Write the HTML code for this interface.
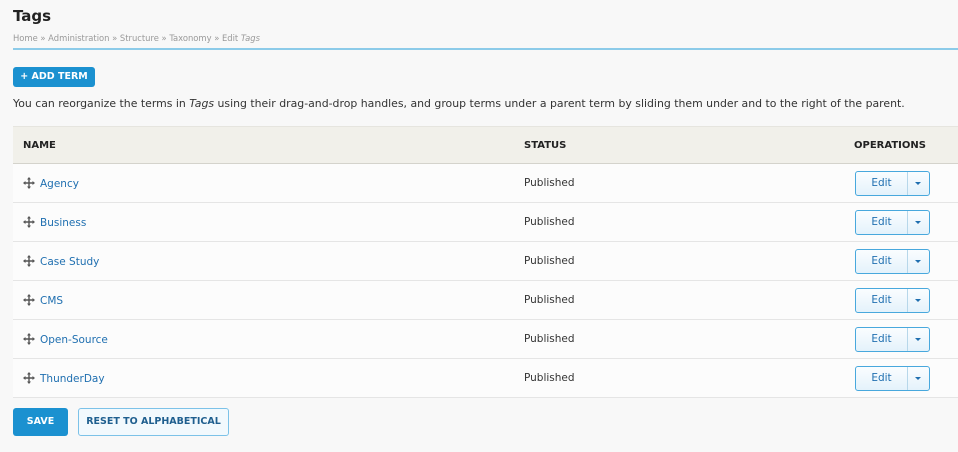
<!DOCTYPE html>
<html><head><style>
body{margin:0;background:#f8f8f8;font-family:"DejaVu Sans",sans-serif;width:958px;height:452px;overflow:hidden;color:#333;}
.t{position:absolute;left:13px;top:7px;font-size:15px;font-weight:bold;color:#222;}
.bc{position:absolute;left:13px;top:33px;font-size:8.4px;color:#999;}
.ln{position:absolute;left:13px;right:0;top:48px;height:2px;background:#8ccbe9;}
.add{position:absolute;left:13px;top:67px;width:82px;height:20px;background:#1b91d0;border-radius:3px;color:#fff;font-size:9.5px;font-weight:bold;text-align:center;line-height:20px;}
.desc{position:absolute;left:13px;top:97px;font-size:10.9px;color:#333;white-space:nowrap;}
table{position:absolute;left:13px;top:126px;width:945px;border-collapse:collapse;font-size:10.5px;table-layout:fixed;}
th{background:#f1f0ea;height:36px;padding:0;text-align:left;font-size:10px;color:#222;border-bottom:1px solid #d4d3cc;border-top:1px solid #e6e5df;}
td{height:38px;padding:0;border-bottom:1px solid #e5e5e5;background:#fcfcfc;}
a{color:#1f6fb0;text-decoration:none;}
.mv{display:inline-block;width:12px;height:12px;vertical-align:-2px;margin:0 5px 0 10px;}
.ed{display:inline-flex;border:1px solid #48a8dd;border-radius:3px;height:23px;background:linear-gradient(#fafdff,#e4f2fb);width:73px;vertical-align:middle;margin-top:1px;}
.ed span{flex:1;text-align:center;line-height:23px;color:#1f6fb0;font-size:10.5px;}
.ed i{width:21px;border-left:1px solid #b7d7ea;position:relative}
.ed i:after{content:"";position:absolute;left:7px;top:10px;border:3px solid transparent;border-top:3px solid #1f6fb0;}
.save{position:absolute;left:13px;top:408px;width:55px;height:28px;background:#1b91d0;border-radius:3px;color:#fff;font-size:9.5px;font-weight:bold;text-align:center;line-height:28px;}
.rst{position:absolute;left:78px;top:408px;width:149px;height:26px;border:1px solid #7cc2e8;border-radius:3px;background:#f2f9fd;color:#1f5f8f;font-size:9.5px;font-weight:bold;text-align:center;line-height:26px;}
</style></head><body>
<div class="t">Tags</div>
<div class="bc">Home » Administration » Structure » Taxonomy » Edit <i>Tags</i></div>
<div class="ln"></div>
<div class="add">+ ADD TERM</div>
<div class="desc">You can reorganize the terms in <i>Tags</i> using their drag-and-drop handles, and group terms under a parent term by sliding them under and to the right of the parent.</div>
<table>
<colgroup><col style="width:511px"><col style="width:330px"><col></colgroup>
<tr><th style="padding-left:10px">NAME</th><th>STATUS</th><th>OPERATIONS</th></tr>
<tr><td><svg class="mv" viewBox="0 0 12 12"><path d="M6 0L8 2.5H4ZM6 12L4 9.5H8ZM0 6L2.5 4V8ZM12 6L9.5 8V4ZM5.3 2h1.4v8H5.3ZM2 5.3h8v1.4H2Z" fill="#555"/></svg><a>Agency</a></td><td>Published</td><td style="padding-left:1px"><div class="ed"><span>Edit</span><i></i></div></td></tr>
<tr><td><svg class="mv" viewBox="0 0 12 12"><path d="M6 0L8 2.5H4ZM6 12L4 9.5H8ZM0 6L2.5 4V8ZM12 6L9.5 8V4ZM5.3 2h1.4v8H5.3ZM2 5.3h8v1.4H2Z" fill="#555"/></svg><a>Business</a></td><td>Published</td><td style="padding-left:1px"><div class="ed"><span>Edit</span><i></i></div></td></tr>
<tr><td><svg class="mv" viewBox="0 0 12 12"><path d="M6 0L8 2.5H4ZM6 12L4 9.5H8ZM0 6L2.5 4V8ZM12 6L9.5 8V4ZM5.3 2h1.4v8H5.3ZM2 5.3h8v1.4H2Z" fill="#555"/></svg><a>Case Study</a></td><td>Published</td><td style="padding-left:1px"><div class="ed"><span>Edit</span><i></i></div></td></tr>
<tr><td><svg class="mv" viewBox="0 0 12 12"><path d="M6 0L8 2.5H4ZM6 12L4 9.5H8ZM0 6L2.5 4V8ZM12 6L9.5 8V4ZM5.3 2h1.4v8H5.3ZM2 5.3h8v1.4H2Z" fill="#555"/></svg><a>CMS</a></td><td>Published</td><td style="padding-left:1px"><div class="ed"><span>Edit</span><i></i></div></td></tr>
<tr><td><svg class="mv" viewBox="0 0 12 12"><path d="M6 0L8 2.5H4ZM6 12L4 9.5H8ZM0 6L2.5 4V8ZM12 6L9.5 8V4ZM5.3 2h1.4v8H5.3ZM2 5.3h8v1.4H2Z" fill="#555"/></svg><a>Open-Source</a></td><td>Published</td><td style="padding-left:1px"><div class="ed"><span>Edit</span><i></i></div></td></tr>
<tr><td><svg class="mv" viewBox="0 0 12 12"><path d="M6 0L8 2.5H4ZM6 12L4 9.5H8ZM0 6L2.5 4V8ZM12 6L9.5 8V4ZM5.3 2h1.4v8H5.3ZM2 5.3h8v1.4H2Z" fill="#555"/></svg><a>ThunderDay</a></td><td>Published</td><td style="padding-left:1px"><div class="ed"><span>Edit</span><i></i></div></td></tr>
</table>
<div class="save">SAVE</div>
<div class="rst">RESET TO ALPHABETICAL</div>
</body></html>
